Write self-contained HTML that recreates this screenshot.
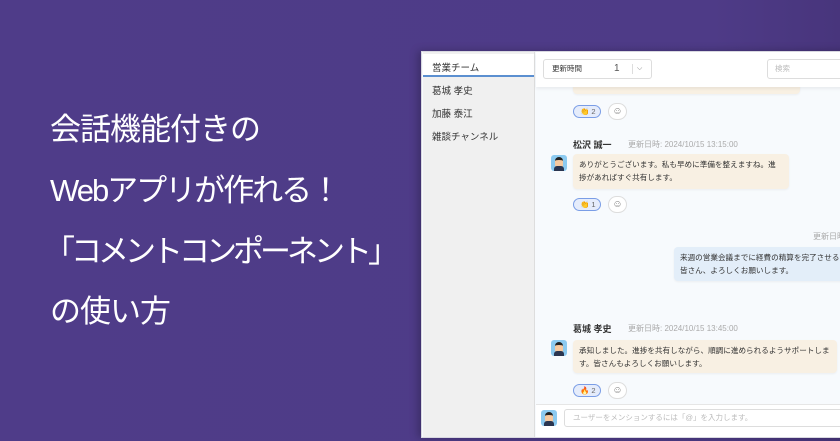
<!DOCTYPE html>
<html><head><meta charset="utf-8"><style>
*{margin:0;padding:0;box-sizing:border-box}
body{width:840px;height:441px;overflow:hidden;background:linear-gradient(90deg,#4f3c89 0%,#4e3b87 85%,#48357c 100%);font-family:"Liberation Sans","Noto Sans CJK JP",sans-serif;position:relative}
.t{position:absolute;left:50px;color:#fff;font-size:31px;letter-spacing:-1px;white-space:nowrap;line-height:1}
.a{position:absolute;white-space:nowrap}
.panel{left:421px;top:51px;width:430px;height:387px;background:#f7fafd;border:1px solid #d8d8e0;box-shadow:-3px 0 8px rgba(0,0,0,.25)}
.side{left:423px;top:52px;width:112px;height:385px;background:#f0f0f0;border-right:1px solid #ddd}
.si{position:absolute;left:9px;font-size:9.5px;color:#333}
.top{left:536px;top:52px;width:310px;height:35px;background:#fff;box-shadow:0 2px 3px rgba(0,0,0,.06)}
.bub{background:#f8f0e3;border-radius:4px;font-size:7.6px;color:#333;line-height:13px;padding:4px 6px;box-shadow:0 1px 2px rgba(0,0,0,.05);white-space:normal}
.rx{width:28px;height:13px;border:1px solid #7a9de6;background:#e5ecfb;border-radius:7px;font-size:7.5px;color:#666;line-height:11px;padding-left:6px}
.sm{width:19px;height:17px;border:1px solid #ddd;border-radius:9px;background:#fff;font-size:10px;color:#777;text-align:center;line-height:15px}
.nm{font-size:9px;font-weight:bold;color:#333}
.dt{font-size:8px;color:#aaa}
.av{width:16px;height:16px;border-radius:3px;background:#8ccaf0;overflow:hidden}
.av::before{content:"";position:absolute;left:4px;top:2px;width:8px;height:9px;border-radius:4px;background:#f6c9a0;border-top:3px solid #222}
.av::after{content:"";position:absolute;left:3px;top:11px;width:10px;height:5px;background:#2a3550;border-radius:3px 3px 0 0}
</style></head><body>
<div class="t" style="top:114px">会話機能付きの</div>
<div class="t" style="top:175px;letter-spacing:-2px">Webアプリが作れる！</div>
<div class="t" style="top:236px;letter-spacing:-4px;left:44px">「コメントコンポーネント」</div>
<div class="t" style="top:296px">の使い方</div>

<div class="a panel"></div>
<div class="a side">
 <div class="a" style="left:0;top:2px;width:111px;height:23px;background:#fff;border-bottom:2px solid #5b8fd0"></div>
 <div class="si" style="top:8px">営業チーム</div>
 <div class="si" style="top:31px">葛城 孝史</div>
 <div class="si" style="top:54px">加藤 泰江</div>
 <div class="si" style="top:77px">雑談チャンネル</div>
</div>

<div class="a bub" style="left:573px;top:76px;width:227px;height:18px;color:#666;font-size:7px;line-height:10px;padding-top:3px">いとう様。早めに始めます。</div>
<div class="a top"></div>
<div class="a" style="left:543px;top:59px;width:109px;height:20px;border:1px solid #ddd;border-radius:3px;background:#fff;font-size:7.5px;color:#333;line-height:18px;padding-left:8px">更新時間<span style="position:absolute;left:70px;font-size:10px;color:#555">1</span><span style="position:absolute;left:88px;top:4px;height:10px;border-left:1px solid #ddd"></span><span style="position:absolute;left:93px;color:#777;font-size:7px">⌵</span></div>
<div class="a" style="left:767px;top:59px;width:80px;height:20px;border:1px solid #ddd;border-radius:3px;background:#fff;font-size:7.5px;color:#bbb;line-height:18px;padding-left:7px">検索</div>

<div class="a rx" style="left:573px;top:105px">👏 2</div>
<div class="a sm" style="left:608px;top:103px">☺</div>

<div class="a nm" style="left:573px;top:138px">松沢 誠一</div>
<div class="a dt" style="left:628px;top:139px">更新日時: 2024/10/15 13:15:00</div>
<div class="a av" style="left:551px;top:155px"></div>
<div class="a bub" style="left:573px;top:154px;width:216px;height:35px">ありがとうございます。私も早めに準備を整えますね。進捗があればすぐ共有します。</div>
<div class="a rx" style="left:573px;top:198px">👏 1</div>
<div class="a sm" style="left:608px;top:196px">☺</div>

<div class="a dt" style="left:813px;top:231px">更新日時</div>
<div class="a bub" style="left:674px;top:247px;width:180px;height:34px;background:#e3eef9;white-space:nowrap">来週の営業会議までに経費の精算を完了させる<br>皆さん、よろしくお願いします。</div>

<div class="a nm" style="left:573px;top:322px">葛城 孝史</div>
<div class="a dt" style="left:628px;top:323px">更新日時: 2024/10/15 13:45:00</div>
<div class="a av" style="left:551px;top:340px"></div>
<div class="a bub" style="left:573px;top:340px;width:264px;height:33px">承知しました。進捗を共有しながら、順調に進められるようサポートします。皆さんもよろしくお願いします。</div>
<div class="a rx" style="left:573px;top:384px">🔥 2</div>
<div class="a sm" style="left:608px;top:382px">☺</div>

<div class="a" style="left:536px;top:404px;width:310px;height:33px;background:#fff;border-top:1px solid #e6e6e6"></div>
<div class="a av" style="left:541px;top:410px"></div>
<div class="a" style="left:564px;top:409px;width:290px;height:18px;border:1px solid #ddd;border-radius:3px;background:#fff;font-size:7.5px;color:#bbb;line-height:16px;padding-left:8px">ユーザーをメンションするには「@」を入力します。</div>
</body></html>
